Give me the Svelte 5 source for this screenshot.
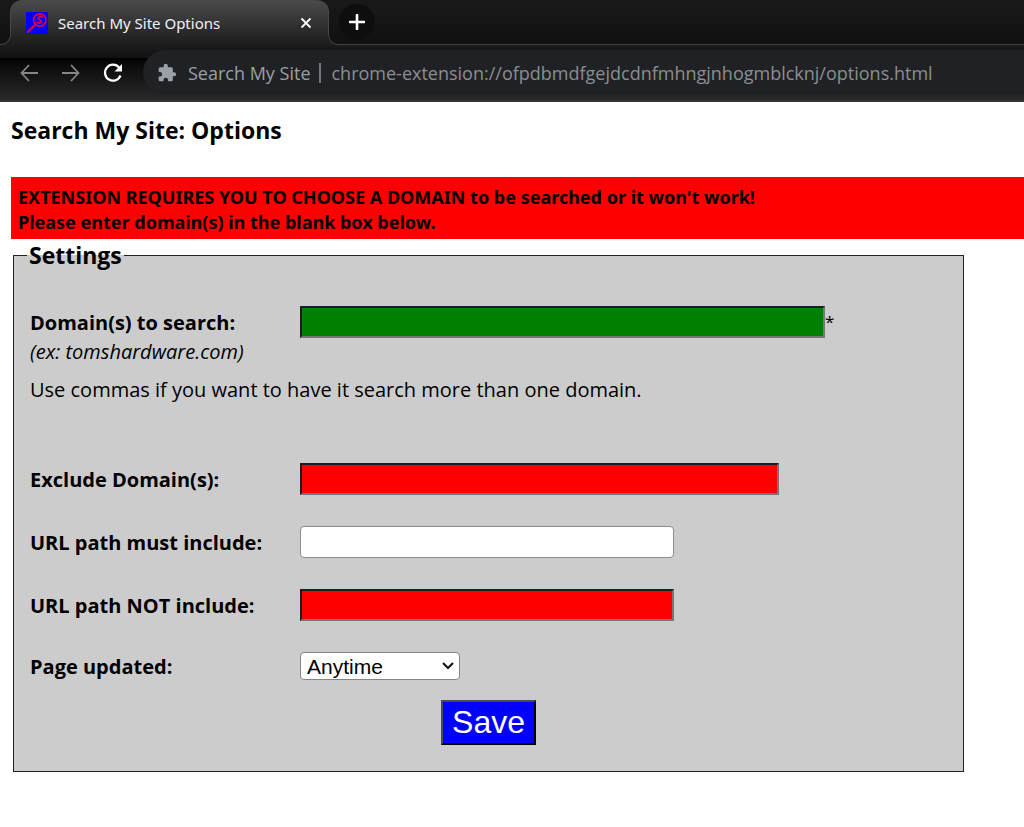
<script lang="ts">
    let url = $state('chrome-extension://ofpdbmdfgejdcdnfmhngjnhogmblcknj/options.html');
    let domains = $state('');
    let excludeDomains = $state('');
    let pathInclude = $state('');
    let pathExclude = $state('');
    let updated = $state('Anytime');

    const periods = ['Anytime', 'Past day', 'Past week', 'Past month', 'Past year'];

    function save(e: SubmitEvent) {
        e.preventDefault();
        const options = { domains, excludeDomains, pathInclude, pathExclude, updated };
        localStorage.setItem('options', JSON.stringify(options));
    }
</script>

<header class="browser">
    <div class="tab-strip">
        <div class="tab">
            <svg class="favicon" viewBox="0 0 22 22" aria-hidden="true">
                <rect width="22" height="22" fill="#0000ff" />
                <g fill="none" stroke="#f0002c" stroke-linecap="round">
                    <circle cx="13.8" cy="8" r="6.2" stroke-width="1.5" />
                    <path d="M9.2 12.6 1.7 20" stroke-width="1.9" />
                    <path d="M16.2 5.2c-1.5-1-4-.5-4.1 1.1-.1 1.5 3.5 1.3 3.3 3.2-.2 1.7-2.8 2.1-4.3.9" stroke-width="1.6" />
                </g>
            </svg>
            <span class="tab-title">Search My Site Options</span>
            <button class="icon-button close" aria-label="Close tab">
                <svg width="12" height="12" viewBox="0 0 12 12"><path d="M1.5 1.5l9 9M10.5 1.5l-9 9" stroke="#fff" stroke-width="1.8" /></svg>
            </button>
        </div>
        <button class="icon-button new-tab" aria-label="New tab">
            <svg width="16" height="16" viewBox="0 0 16 16"><path d="M8 1v14M1 8h14" stroke="#fff" stroke-width="2.6" stroke-linecap="round" /></svg>
        </button>
    </div>

    <div class="toolbar">
        <nav class="nav-buttons">
            <button class="icon-button" aria-label="Back">
                <svg width="18" height="18" viewBox="0 0 18 18"><path d="M9 1 1.5 9 9 17M1.5 9H18" fill="none" stroke="#85858a" stroke-width="1.8" /></svg>
            </button>
            <button class="icon-button" aria-label="Forward">
                <svg width="18" height="18" viewBox="0 0 18 18"><path d="M9 1l7.5 8L9 17M16.5 9H0" fill="none" stroke="#85858a" stroke-width="1.8" /></svg>
            </button>
            <button class="icon-button" aria-label="Reload">
                <svg width="20" height="20" viewBox="0 0 20 20">
                    <path d="M16.2 4.6A8 8 0 1 0 17.5 12.5" fill="none" stroke="#fff" stroke-width="2.2" />
                    <path d="M19 1v7.5h-7.5z" fill="#fff" />
                </svg>
            </button>
        </nav>
        <div class="omnibox">
            <svg class="puzzle" width="20" height="20" viewBox="0 0 24 24" aria-hidden="true">
                <path fill="#9aa0a6" d="M20.5 11H19V7a2 2 0 0 0-2-2h-4V3.5a2.5 2.5 0 0 0-5 0V5H4a2 2 0 0 0-2 2v3.8h1.5a2.7 2.7 0 0 1 0 5.4H2V20a2 2 0 0 0 2 2h3.8v-1.5a2.7 2.7 0 0 1 5.4 0V22H17a2 2 0 0 0 2-2v-4h1.5a2.5 2.5 0 0 0 0-5z" />
            </svg>
            <span class="extension-name">Search My Site</span>
            <input class="url" type="text" aria-label="Address" spellcheck="false" bind:value={url} />
        </div>
    </div>
</header>

<main>
    <h1>Search My Site: Options</h1>

    <p class="warning">
        EXTENSION REQUIRES YOU TO CHOOSE A DOMAIN to be searched or it won't work!<br />
        Please enter domain(s) in the blank box below.
    </p>

    <form onsubmit={save}>
        <fieldset>
            <legend>Settings</legend>

            <div class="row">
                <label for="domains">Domain(s) to search:</label>
                <div class="field">
                    <input id="domains" class="text colored required" type="text" bind:value={domains} />
                    <span class="star">*</span>
                </div>
            </div>
            <p class="example">(ex: tomshardware.com)</p>
            <p class="help">Use commas if you want to have it search more than one domain.</p>

            <div class="rows">
                <div class="row">
                    <label for="exclude">Exclude Domain(s):</label>
                    <input id="exclude" class="text colored medium" type="text" bind:value={excludeDomains} />
                </div>
                <div class="row">
                    <label for="include">URL path must include:</label>
                    <input id="include" class="text" type="text" bind:value={pathInclude} />
                </div>
                <div class="row">
                    <label for="not-include">URL path NOT include:</label>
                    <input id="not-include" class="text colored" type="text" bind:value={pathExclude} />
                </div>
                <div class="row">
                    <label for="updated">Page updated:</label>
                    <div class="select">
                        <select id="updated" bind:value={updated}>
                            {#each periods as period}
                                <option>{period}</option>
                            {/each}
                        </select>
                        <svg class="chevron" width="12" height="8" viewBox="0 0 12 8" aria-hidden="true"><path d="M1 1l5 5 5-5" fill="none" stroke="#111" stroke-width="2" /></svg>
                    </div>
                </div>
            </div>

            <button class="save" type="submit">Save</button>
        </fieldset>
    </form>
</main>

<style>
    :global(body) {
        margin: 0;
        background: #fff;
        color: #000;
        font-family: "Segoe UI", "Open Sans", sans-serif;
        overflow-x: hidden;
    }

    /* Browser chrome */
    .browser {
        background: #171717;
        border-bottom: 2px solid #353333;
    }

    .tab-strip {
        display: flex;
        align-items: center;
        height: 44px;
        padding-left: 10px;
        background: linear-gradient(#191919, #111);
        border-bottom: 1px solid #414141;
    }

    .tab {
        position: relative;
        box-sizing: border-box;
        display: flex;
        align-items: center;
        width: 319px;
        height: 45px;
        margin-bottom: -1px;
        padding: 0 12px 0 15px;
        background: linear-gradient(#4a4a4a, #1c1c1c);
        border: 1px solid #484848;
        border-bottom: 0;
        border-radius: 12px 12px 0 0;
    }

    /* Curved feet where the tab meets the strip's bottom line */
    .tab::before,
    .tab::after {
        content: "";
        position: absolute;
        bottom: 0;
        width: 10px;
        height: 10px;
        border-bottom: 1px solid #414141;
        background: #121212;
        clip-path: inset(0);
    }

    .tab::before {
        left: -11px;
        border-right: 1px solid #414141;
        border-bottom-right-radius: 10px;
        box-shadow: 3px 3px 0 #1f1f1f;
    }

    .tab::after {
        right: -11px;
        border-left: 1px solid #414141;
        border-bottom-left-radius: 10px;
        box-shadow: -3px 3px 0 #1f1f1f;
    }

    .favicon {
        width: 22px;
        height: 22px;
        margin-right: 10px;
    }

    .tab-title {
        flex: 1;
        color: #f2f2f2;
        font-family: "Segoe UI", "Noto Sans", sans-serif;
        font-size: 15px;
        white-space: nowrap;
    }

    .icon-button {
        display: flex;
        align-items: center;
        justify-content: center;
        width: 20px;
        height: 20px;
        padding: 0;
        border: 0;
        background: none;
        cursor: pointer;
    }

    .new-tab {
        width: 36px;
        height: 36px;
        margin-left: 10px;
        border-radius: 50%;
        background: #0e0e0e;
    }

    .toolbar {
        display: flex;
        align-items: center;
        gap: 20px;
        height: 45px;
        padding: 5px 0 5px 19px;
        background:
            linear-gradient(#1c1c1c, #111) 0 0 / 100% 13px no-repeat,
            linear-gradient(#000, #080808 4px, #292929) 0 13px / 100% 42px no-repeat;
    }

    .nav-buttons {
        display: flex;
        gap: 22px;
    }

    .omnibox {
        flex: 1;
        display: flex;
        align-items: center;
        height: 45px;
        min-width: 0;
        padding-left: 14px;
        border-radius: 23px 0 0 23px;
        background: #202124;
    }

    .puzzle {
        margin-right: 11px;
    }

    .extension-name {
        padding-right: 8px;
        border-right: 2px solid #74787c;
        color: #9aa0a6;
        font-size: 18px;
        line-height: 20px;
        white-space: nowrap;
    }

    .url {
        flex: 1;
        min-width: 0;
        padding: 0 0 0 11px;
        border: 0;
        outline: 0;
        background: none;
        color: #8b8e92;
        font: inherit;
        font-size: 18px;
    }

    /* Options page */
    main {
        padding: 12px 0 0 11px;
    }

    h1 {
        margin: 0 0 31px;
        font-size: 23px;
        line-height: 32px;
    }

    .warning {
        margin: 0;
        padding: 8px 7px 4px;
        background: #f00;
        font-family: "Segoe UI", "Noto Sans", sans-serif;
        font-size: 18px;
        font-weight: bold;
        line-height: 25px;
    }

    form {
        padding: 0 60px 0 2px;
    }

    fieldset {
        box-sizing: border-box;
        max-width: 952px;
        margin: 0;
        padding: 35px 16px 26px;
        border: 1px solid #222;
        background: #ccc;
    }

    legend {
        margin-left: -3px;
        padding: 0 2px;
        font-size: 23px;
        font-weight: bold;
        line-height: 32px;
    }

    .row {
        display: grid;
        grid-template-columns: 270px 1fr;
        align-items: center;
    }

    label {
        padding-top: 2px;
        font-size: 20px;
        font-weight: bold;
        line-height: 26px;
    }

    .field {
        display: flex;
        align-items: center;
    }

    .text {
        box-sizing: border-box;
        width: 374px;
        max-width: 100%;
        height: 32px;
        padding: 2px 4px;
        border: 1px solid #8c8c8c;
        border-radius: 4px;
        background: #fff;
        font-family: "Liberation Sans", Arial, sans-serif;
        font-size: 21px;
    }

    .colored {
        border: 2px solid;
        border-color: #1d1d1d #767676 #767676 #1d1d1d;
        border-radius: 0;
        background: #f00;
    }

    .medium {
        width: 479px;
    }

    .required {
        width: 525px;
        background: #008000;
    }

    .star {
        font-size: 17px;
        line-height: 20px;
    }

    .example,
    .help {
        margin: 0;
        font-size: 20px;
        line-height: 28px;
    }

    .example {
        margin-bottom: 10px;
        font-style: italic;
    }

    .rows {
        display: grid;
        gap: 31px;
        margin: 59px 0 20px;
    }

    .select {
        position: relative;
        width: 160px;
    }

    select {
        display: block;
        width: 100%;
        height: 28px;
        padding: 0 6px;
        appearance: none;
        border: 1px solid #858585;
        border-radius: 4px;
        background: #fff;
        color: #000;
        font-family: "Liberation Sans", Arial, sans-serif;
        font-size: 21px;
    }

    .chevron {
        position: absolute;
        top: 10px;
        right: 6px;
        pointer-events: none;
    }

    .save {
        display: block;
        margin: 0 auto;
        padding: 2px 9px;
        border: 2px solid;
        border-color: #4c4c4c #000 #000 #4c4c4c;
        background: #00f;
        color: #fff;
        font-family: "Liberation Sans", Arial, sans-serif;
        font-size: 32px;
        cursor: pointer;
    }
</style>
